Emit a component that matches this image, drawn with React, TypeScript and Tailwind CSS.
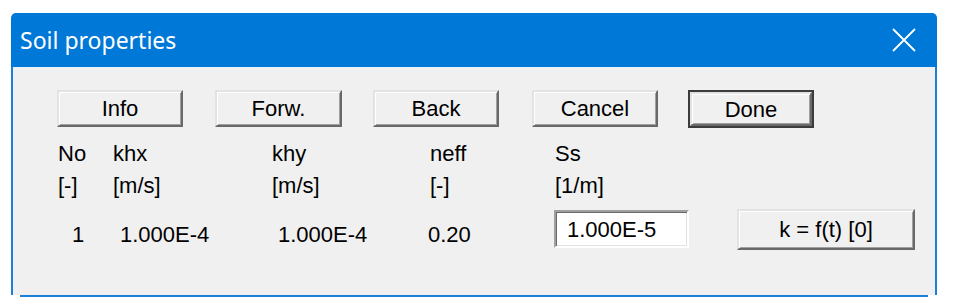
import React from 'react'

const raised =
    'border-2 border-t-[#e3e3e3] border-l-[#e3e3e3] border-b-[#696969] border-r-[#696969] shadow-[inset_1px_1px_0_#ffffff,inset_-1px_-1px_0_#a0a0a0]'

const WinButton: React.FC<{ label: string; isDefault?: boolean; className?: string }> = ({
    label,
    isDefault,
    className = '',
}) => {
    if (isDefault) {
        return (
            <div className={`border-2 border-[#3c3c3c] bg-[#f0f0f0] ${className}`}>
                <div
                    className={`flex h-full w-full items-center justify-center text-black ${raised}`}
                >
                    {label}
                </div>
            </div>
        )
    }
    return (
        <div
            className={`flex items-center justify-center bg-[#f0f0f0] text-black ${raised} ${className}`}
        >
            {label}
        </div>
    )
}

export default function App() {
    return (
        <div className="h-[307px] w-[958px] bg-white pl-[11px] pt-[13px] font-['Liberation_Sans',Arial,sans-serif] text-[22px] text-black">
            <div className="flex w-[926px] flex-col">
                {/* Title bar */}
                <div className="flex h-[54px] items-center justify-between rounded-tl-[5px] rounded-tr-[5px] bg-[#0078d7] pl-[9px] pr-[21px]">
                    <span className="font-['Noto_Sans','Open_Sans',sans-serif] text-[23px] text-white">
                        Soil properties
                    </span>
                    <svg width="24" height="24" viewBox="0 0 24 24" className="text-white">
                        <path
                            d="M1 1 L23 23 M23 1 L1 23"
                            stroke="currentColor"
                            strokeWidth="1.8"
                            fill="none"
                        />
                    </svg>
                </div>

                {/* Client area */}
                <div className="h-[228px] border-x-2 border-[#1a80d9] bg-[#f0f0f0] pt-[23px]">
                    {/* Buttons */}
                    <div className="flex pl-[44px]">
                        <WinButton label="Info" className="h-[37px] w-[126px]" />
                        <WinButton label="Forw." className="ml-[32px] h-[37px] w-[127px]" />
                        <WinButton label="Back" className="ml-[31px] h-[37px] w-[126px]" />
                        <WinButton label="Cancel" className="ml-[33px] h-[37px] w-[126px]" />
                        <WinButton label="Done" isDefault className="ml-[30px] h-[38px] w-[126px]" />
                    </div>

                    {/* Column headers */}
                    <div className="mt-[10px] grid grid-cols-[55px_159px_158px_125px_1fr] pl-[45px] leading-[32px]">
                        <span>No</span>
                        <span>khx</span>
                        <span>khy</span>
                        <span>neff</span>
                        <span>Ss</span>
                        <span>[-]</span>
                        <span>[m/s]</span>
                        <span>[m/s]</span>
                        <span>[-]</span>
                        <span>[1/m]</span>
                    </div>

                    {/* Data row */}
                    <div className="flex items-start pl-[59px]">
                        <span className="mt-[17px] w-[48px] leading-[32px]">1</span>
                        <span className="mt-[17px] w-[158px] leading-[32px]">1.000E-4</span>
                        <span className="mt-[17px] w-[150px] leading-[32px]">1.000E-4</span>
                        <span className="mt-[17px] w-[126px] leading-[32px]">0.20</span>
                        <div className="mt-[8px] flex h-[38px] w-[135px] items-center border-2 border-t-[#a0a0a0] border-l-[#a0a0a0] border-b-[#ffffff] border-r-[#ffffff] bg-white pl-[11px] shadow-[inset_1px_1px_0_#696969,inset_-1px_-1px_0_#e3e3e3]">
                            1.000E-5
                        </div>
                        <WinButton label="k = f(t) [0]" className="ml-[48px] mt-[7px] h-[41px] w-[178px]" />
                    </div>
                </div>

                {/* Bottom edge */}
                <div className="mx-[9px] h-[2px] bg-[#1a80d9]" />
            </div>
        </div>
    )
}
